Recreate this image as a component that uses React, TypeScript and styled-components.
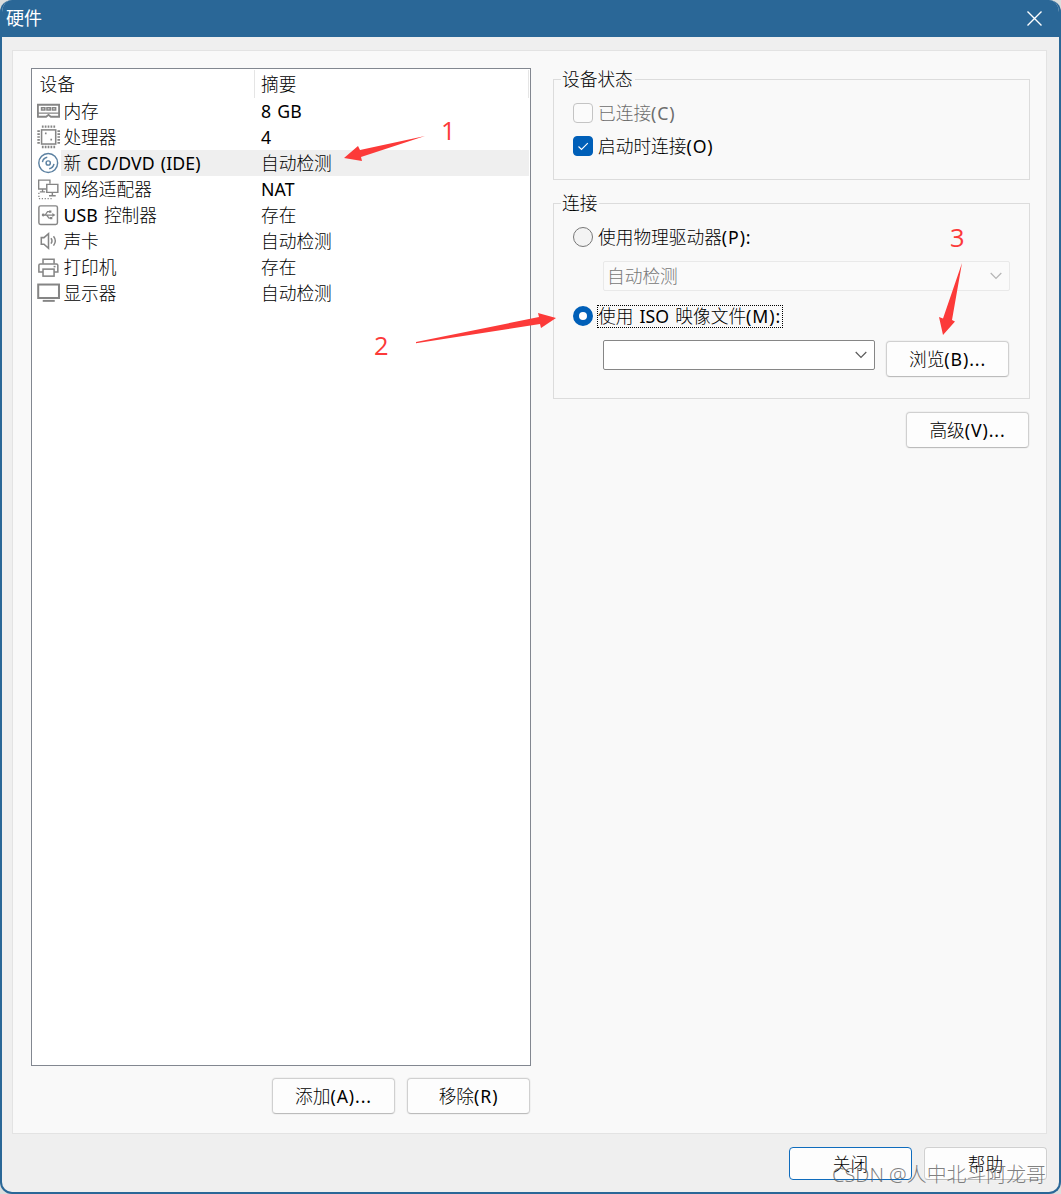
import React from "react";
import styled, { createGlobalStyle, css } from "styled-components";

const Global = createGlobalStyle`
  * { box-sizing: border-box; }
  html, body { margin: 0; padding: 0; }
  body {
    background: #dcdedd;
    font-family: "Noto Sans", "Noto Sans CJK SC", sans-serif;
    font-size: 17.7px;
    color: #000;
  }
`;

const Dialog = styled.div`
  position: relative;
  width: 1061px;
  height: 1194px;
  display: flex;
  flex-direction: column;
  background: #efefef;
  border: 2px solid #2a6797;
  border-top: 0;
  border-radius: 12px;
  overflow: hidden;
`;

const TitleBar = styled.header`
  height: 37px;
  flex: none;
  margin: 0 -2px;
  padding: 0 18px 0 6px;
  display: flex;
  align-items: center;
  justify-content: space-between;
  background: #2a6797;
  color: #fff;
  font-size: 18px;
  line-height: 34px;
`;

const TitleText = styled.span`
  padding-bottom: 2px;
`;

const Panel = styled.main`
  flex: none;
  height: 1084px;
  margin: 13px 12px 0 10px;
  border: 1px solid #e3e3e3;
  background: #f9f9f9;
  display: flex;
  align-items: flex-start;
  gap: 22px;
  padding: 17px 0 0 18px;
`;

const LeftColumn = styled.section`
  width: 500px;
  display: flex;
  flex-direction: column;
`;

const RightColumn = styled.section`
  width: 477px;
  display: flex;
  flex-direction: column;
`;

const DeviceList = styled.div`
  height: 998px;
  padding: 1px 1px 0 0;
  border: 1px solid #828790;
  background: #fff;
`;

const columns = css`
  display: grid;
  grid-template-columns: 29px 194px 1fr;
`;

const ListHeader = styled.div`
  height: 28px;
  display: grid;
  grid-template-columns: 223px 1fr;
  line-height: 28px;
`;

const HeaderCell = styled.div<{ $pad: number }>`
  padding-left: ${(p) => p.$pad}px;
  border-right: 1px solid #e5e5e5;
  font-weight: 300;
`;

const DeviceRow = styled.div<{ $selected?: boolean }>`
  ${columns}
  height: 26px;
  line-height: 27px;
  background: ${(p) =>
    p.$selected ? "linear-gradient(90deg, #fff 29px, #efefef 29px)" : "#fff"};
`;

const IconCell = styled.span`
  display: flex;
  padding-left: 4px;
`;

const Cell = styled.span<{ $pad: number }>`
  padding-left: ${(p) => p.$pad}px;
  white-space: nowrap;
`;

const Cjk = styled.span`
  font-weight: 300;
`;

const Latin = styled.span<{ $loose: boolean }>`
  word-spacing: 1.3px;
  letter-spacing: ${(p) => (p.$loose ? "0.9px" : "0.12px")};
`;

const ButtonRow = styled.div<{ $top: number }>`
  display: flex;
  justify-content: flex-end;
  gap: 12px;
  margin-top: ${(p) => p.$top}px;
  padding-right: 1px;
`;

const Button = styled.button<{ $primary?: boolean; $height?: number }>`
  width: 123px;
  height: ${(p) => p.$height ?? 36}px;
  flex: none;
  padding: 0;
  font: inherit;
  line-height: 32px;
  color: #000;
  background: #fdfdfd;
  border: 1px solid ${(p) => (p.$primary ? "#0f6cbd" : "#d0d0d0")};
  border-bottom-color: ${(p) => (p.$primary ? "#0f6cbd" : "#bcbcbc")};
  border-radius: 4px;
  box-shadow: ${(p) => (p.$primary ? "none" : "0 0 0 1px #f1f1f1")};
`;

const Group = styled.fieldset<{ $top: number; $height: number }>`
  width: 477px;
  height: ${(p) => p.$height}px;
  margin: ${(p) => p.$top}px 0 0;
  padding: 0 19px;
  min-width: 0;
  border: 1px solid #dcdcdc;
`;

const Legend = styled.legend`
  height: 24px;
  line-height: 24px;
  margin-left: -12px;
  padding: 0 2px 0 1px;
  font-weight: 300;
`;

const Option = styled.label<{ $top?: number; $disabled?: boolean }>`
  display: flex;
  align-items: flex-start;
  gap: 4px;
  height: 23px;
  line-height: 21px;
  margin-top: ${(p) => p.$top ?? 0}px;
  color: ${(p) => (p.$disabled ? "#6d6d6d" : "#000")};
`;

const OptionText = styled.span<{ $focused?: boolean }>`
  height: 23px;
  padding: 0 0.5px 0 0;
  border: 1px dotted ${(p) => (p.$focused ? "#000" : "transparent")};
  white-space: nowrap;
`;

const CheckBox = styled.span<{ $checked?: boolean }>`
  width: 20px;
  height: 20px;
  margin-top: 1px;
  display: flex;
  border-radius: 4px;
  border: 1px solid ${(p) => (p.$checked ? "#005fb8" : "#c4c4c4")};
  background: ${(p) => (p.$checked ? "#005fb8" : "#fbfbfb")};
`;

const Radio = styled.span<{ $checked?: boolean }>`
  width: 20px;
  height: 20px;
  margin-top: 1px;
  border-radius: 50%;
  border: ${(p) => (p.$checked ? "6px solid #005fb8" : "1px solid #777")};
  background: ${(p) => (p.$checked ? "#fff" : "#f3f3f3")};
`;

const Combo = styled.div<{ $disabled?: boolean; $width: number }>`
  width: ${(p) => p.$width}px;
  flex: none;
  height: 30px;
  display: flex;
  align-items: center;
  justify-content: space-between;
  padding: 0 7px 0 3px;
  border: 1px solid ${(p) => (p.$disabled ? "#e9e9e9" : "#868686")};
  border-radius: 2px;
  background: ${(p) => (p.$disabled ? "#fafafa" : "#fff")};
  color: ${(p) => (p.$disabled ? "#777" : "#333")};
  line-height: 28px;

  svg {
    color: ${(p) => (p.$disabled ? "#b4b4b4" : "#5a5a5a")};
  }
`;

const ComboRow = styled.div<{ $top: number }>`
  display: flex;
  align-items: flex-start;
  gap: 11px;
  margin: ${(p) => p.$top}px 0 0 30px;
`;

const BrowseSlot = styled.div`
  padding-top: 1px;
  display: flex;
`;

const Footer = styled.footer`
  display: flex;
  justify-content: flex-end;
  gap: 12px;
  padding: 13px 12px 0 0;
`;

const Mark = styled.span<{ $x: number; $y: number }>`
  position: absolute;
  left: ${(p) => p.$x}px;
  top: ${(p) => p.$y}px;
  font-family: "Open Sans", "Noto Sans", sans-serif;
  font-size: 25.5px;
  line-height: 26px;
  color: #fc3a39;
`;

const Arrows = styled.svg`
  position: absolute;
  left: -2px;
  top: 0;
  pointer-events: none;
`;

const Watermark = styled.div`
  position: absolute;
  right: 13px;
  bottom: 3px;
  font-size: 19.9px;
  line-height: 28px;
  font-weight: 300;
  color: rgba(95, 95, 95, 0.8);
  white-space: nowrap;
`;

const GRAY = "#858585";

const Icon = ({ children, color = GRAY }: { children: React.ReactNode; color?: string }) => (
  <svg width="26" height="26" viewBox="0 0 26 26" fill="none" stroke={color} strokeWidth="1.6">
    {children}
  </svg>
);

const MemoryIcon = () => (
  <Icon>
    <path d="M2 6.5H24V19H15.5L13 17L10.5 19H2Z" strokeWidth="1.9" />
    <path d="M2 15.2H24" strokeWidth="1.2" />
    <path d="M5.8 9.6H9.2V12H5.8ZM11.4 9.6H14.8V12H11.4ZM17 9.6H20.4V12H17Z" strokeWidth="1.6" />
  </Icon>
);

const CpuIcon = () => (
  <Icon>
    <rect x="5.8" y="5.6" width="14.7" height="14.7" />
    <path
      d="M7 1V3.4M10 1V3.4M13 1V3.4M16 1V3.4M19 1V3.4M7 22.2V24.6M10 22.2V24.6M13 22.2V24.6M16 22.2V24.6M19 22.2V24.6M1.4 7H4M1.4 10H4M1.4 13H4M1.4 16H4M1.4 19H4M22.3 7H25M22.3 10H25M22.3 13H25M22.3 16H25M22.3 19H25"
      strokeWidth="1.8"
    />
    <path d="M9.3 9.3H11M15 15.8H16.7" strokeWidth="1.8" />
  </Icon>
);

const DiscIcon = () => (
  <Icon color="#5d82a2">
    <circle cx="12.7" cy="13" r="9.8" strokeWidth="1.5" />
    <circle cx="12.7" cy="13" r="2.2" strokeWidth="1.5" />
    <path d="M6.7 12A6.2 6.2 0 0 1 11.7 7M18.7 14A6.2 6.2 0 0 1 13.7 19" strokeWidth="1.5" />
  </Icon>
);

const NetworkIcon = () => (
  <Icon>
    <path d="M10.5 13H2.8V3.7H14.5V7.5M6.8 13V15.5M4 16H9.5" strokeWidth="1.4" />
    <path d="M11.2 8.2H22.7V16.5H11.2ZM17 16.5V19.5M13.5 20H20.5" strokeWidth="1.5" />
    <path d="M3 17V23M3 23H17" strokeDasharray="1.3 1.7" strokeWidth="1.4" />
  </Icon>
);

const UsbIcon = () => (
  <Icon>
    <rect x="3" y="3.5" width="19.3" height="19.3" rx="1.8" strokeWidth="1.5" />
    <path d="M7 13H18M9.5 13L12 9.5H14M11 13L13.5 16.3H15" strokeWidth="1.3" />
    <circle cx="7.5" cy="13" r="1.5" fill={GRAY} stroke="none" />
    <path d="M17 11L20.2 13L17 15ZM13.5 8.2H16V10.7H13.5ZM14.5 15H17V17.5H14.5Z" fill={GRAY} stroke="none" />
  </Icon>
);

const SoundIcon = () => (
  <Icon>
    <path d="M5.5 9.5H8.3L13 5.3V20.5L8.3 16.3H5.5Z" />
    <path d="M15.6 10Q17.7 12.8 15.6 15.8M18.2 8Q22 12.8 18.2 17.8" strokeWidth="1.5" />
  </Icon>
);

const PrinterIcon = () => (
  <Icon>
    <path d="M7.3 9.5V5H18.8V9.5" />
    <path d="M7.3 18.2H3V11.2Q3 9.8 4.5 9.8H21.2Q22.7 9.8 22.7 11.2V18.2H18.8" />
    <rect x="7.3" y="15.2" width="11.5" height="7.3" />
    <path d="M18.3 12.6H20.3" />
  </Icon>
);

const DisplayIcon = () => (
  <Icon>
    <rect x="2.3" y="4.2" width="21.6" height="14" strokeWidth="2.1" />
    <path d="M7 21.2H19.5" strokeWidth="2" />
  </Icon>
);

const ChevronDown = () => (
  <svg width="12" height="8" viewBox="0 0 12 8" fill="none" stroke="currentColor" strokeWidth="1.2">
    <path d="M0.7 1L6 6.3L11.3 1" />
  </svg>
);

const devices = [
  { icon: MemoryIcon, name: "内存", summary: "8 GB" },
  { icon: CpuIcon, name: "处理器", summary: "4" },
  { icon: DiscIcon, name: "新 CD/DVD (IDE)", summary: "自动检测", selected: true },
  { icon: NetworkIcon, name: "网络适配器", summary: "NAT" },
  { icon: UsbIcon, name: "USB 控制器", summary: "存在" },
  { icon: SoundIcon, name: "声卡", summary: "自动检测" },
  { icon: PrinterIcon, name: "打印机", summary: "存在" },
  { icon: DisplayIcon, name: "显示器", summary: "自动检测" },
];

/* Chinese runs use the light weight; bracketed access keys are spaced a little wider. */
const Mixed = ({ text }: { text: string }) => (
  <>
    {text.split(/([\u4e00-\u9fff]+)/).filter(Boolean).map((part, i) =>
      /[\u4e00-\u9fff]/.test(part) ? (
        <Cjk key={i}>{part}</Cjk>
      ) : (
        <Latin key={i} $loose={part.startsWith("(")}>{part}</Latin>
      )
    )}
  </>
);

export default function App() {
  return (
    <Dialog>
      <Global />
      <TitleBar>
        <TitleText>硬件</TitleText>
        <svg width="17" height="17" viewBox="0 0 17 17" stroke="#fff" strokeWidth="1.4">
          <path d="M1.5 1.5L15.5 15.5M15.5 1.5L1.5 15.5" />
        </svg>
      </TitleBar>

      <Panel>
        <LeftColumn>
          <DeviceList>
            <ListHeader>
              <HeaderCell $pad={7.5}>设备</HeaderCell>
              <HeaderCell $pad={6}>摘要</HeaderCell>
            </ListHeader>
            {devices.map(({ icon: DeviceIcon, name, summary, selected }) => (
              <DeviceRow key={name} $selected={selected}>
                <IconCell>
                  <DeviceIcon />
                </IconCell>
                <Cell $pad={2.4}>
                  <Mixed text={name} />
                </Cell>
                <Cell $pad={6}>
                  <Mixed text={summary} />
                </Cell>
              </DeviceRow>
            ))}
          </DeviceList>
          <ButtonRow $top={12}>
            <Button><Mixed text="添加(A)..." /></Button>
            <Button><Mixed text="移除(R)" /></Button>
          </ButtonRow>
        </LeftColumn>

        <RightColumn>
          <Group $top={-1} $height={113}>
            <Legend>设备状态</Legend>
            <Option $top={11} $disabled>
              <CheckBox />
              <OptionText><Mixed text="已连接(C)" /></OptionText>
            </Option>
            <Option $top={10}>
              <CheckBox $checked>
                <svg width="18" height="18" viewBox="0 0 18 18" fill="none" stroke="#fff" strokeWidth="1.1">
                  <path d="M4.5 9.5L7.5 12.5L13.8 6.2" />
                </svg>
              </CheckBox>
              <OptionText><Mixed text="启动时连接(O)" /></OptionText>
            </Option>
          </Group>

          <Group $top={11} $height={208}>
            <Legend>连接</Legend>
            <Option $top={11}>
              <Radio />
              <OptionText><Mixed text="使用物理驱动器(P):" /></OptionText>
            </Option>
            <ComboRow $top={12}>
              <Combo $width={407} $disabled>
                <Cjk>自动检测</Cjk>
                <ChevronDown />
              </Combo>
            </ComboRow>
            <Option $top={14}>
              <Radio $checked />
              <OptionText $focused><Mixed text="使用 ISO 映像文件(M):" /></OptionText>
            </Option>
            <ComboRow $top={12}>
              <Combo $width={272}>
                <span />
                <ChevronDown />
              </Combo>
              <BrowseSlot>
                <Button><Mixed text="浏览(B)..." /></Button>
              </BrowseSlot>
            </ComboRow>
          </Group>

          <ButtonRow $top={13}>
            <Button><Mixed text="高级(V)..." /></Button>
          </ButtonRow>
        </RightColumn>
      </Panel>

      <Footer>
        <Button $primary $height={33}><Mixed text="关闭" /></Button>
        <Button $height={33}><Mixed text="帮助" /></Button>
      </Footer>

      <Arrows width="1061" height="500" viewBox="0 0 1061 500" fill="#fc3a39">
        <path d="M344 158L358 146L360 150L425 136L361 157L362 161Z" />
        <path d="M556 318L538 313L539 317L416 342V343.3L540 324L541 328Z" />
        <path d="M943 335L939 317L943 318.5L962 263L952 320L955 321.5Z" />
      </Arrows>
      <Mark $x={439} $y={117}>1</Mark>
      <Mark $x={372} $y={332}>2</Mark>
      <Mark $x={948} $y={224}>3</Mark>
      <Watermark>CSDN @人中北斗阿龙哥</Watermark>
    </Dialog>
  );
}
